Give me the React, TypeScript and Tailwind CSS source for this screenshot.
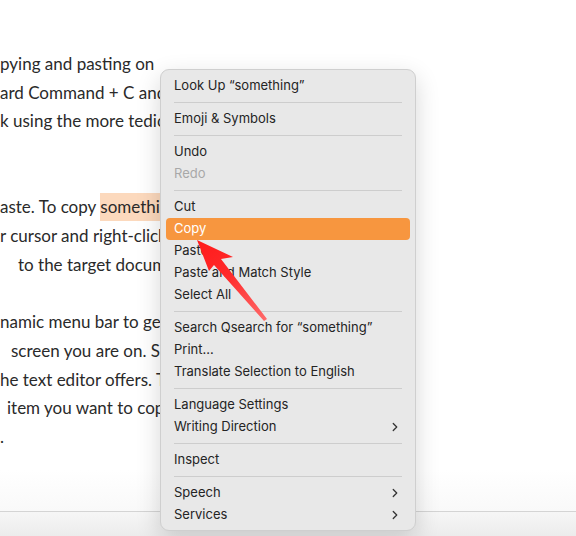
import { ChevronRight } from 'lucide-react';

type Entry =
  | { kind: 'item'; label: string; disabled?: boolean; active?: boolean; submenu?: boolean }
  | { kind: 'sep' };

const menu: Entry[] = [
  { kind: 'item', label: 'Look Up \u201csomething\u201d' },
  { kind: 'sep' },
  { kind: 'item', label: 'Emoji & Symbols' },
  { kind: 'sep' },
  { kind: 'item', label: 'Undo' },
  { kind: 'item', label: 'Redo', disabled: true },
  { kind: 'sep' },
  { kind: 'item', label: 'Cut' },
  { kind: 'item', label: 'Copy', active: true },
  { kind: 'item', label: 'Paste' },
  { kind: 'item', label: 'Paste and Match Style' },
  { kind: 'item', label: 'Select All' },
  { kind: 'sep' },
  { kind: 'item', label: 'Search Qsearch for \u201csomething\u201d' },
  { kind: 'item', label: 'Print\u2026' },
  { kind: 'item', label: 'Translate Selection to English' },
  { kind: 'sep' },
  { kind: 'item', label: 'Language Settings' },
  { kind: 'item', label: 'Writing Direction', submenu: true },
  { kind: 'sep' },
  { kind: 'item', label: 'Inspect' },
  { kind: 'sep' },
  { kind: 'item', label: 'Speech', submenu: true },
  { kind: 'item', label: 'Services', submenu: true },
];

function ContextMenu() {
  return (
    <div className="absolute left-[160px] top-[69px] w-[256px] rounded-[9px] border border-[#cfcfcf] bg-[#e8e8e8] px-[5px] pt-[5px] pb-[4px] shadow-[0_8px_24px_rgba(0,0,0,0.16)] font-['Inter',sans-serif] text-[13px]">
      {menu.map((entry, i) => {
        if (entry.kind === 'sep') {
          return (
            <div key={i} className="flex h-[11px] items-center px-[8px]">
              <div className="h-px w-full bg-[#cdcdcd]" />
            </div>
          );
        }
        return (
          <div
            key={i}
            className={
              'flex h-[22px] items-center justify-between rounded-[4px] pl-[8px] pr-[8px] ' +
              (entry.active
                ? 'bg-[#f7963f] text-white'
                : entry.disabled
                ? 'text-[#a8a8a8]'
                : 'text-[#242424]')
            }
          >
            <span>{entry.label}</span>
            {entry.submenu && <ChevronRight className="h-[14px] w-[14px] text-[#333]" strokeWidth={2.2} />}
          </div>
        );
      })}
    </div>
  );
}

function Arrow() {
  return (
    <svg className="pointer-events-none absolute left-0 top-0" width="576" height="536" viewBox="0 0 576 536">
      <defs>
        <linearGradient id="arr" x1="197" y1="240" x2="266" y2="321" gradientUnits="userSpaceOnUse">
          <stop offset="0" stopColor="#ff1a1a" />
          <stop offset="0.45" stopColor="#ff2b2b" />
          <stop offset="1" stopColor="#ff6a6a" />
        </linearGradient>
      </defs>
      <polygon
        points="197,240 233,257 221,259 267,319 264,321 214,265 209,271"
        fill="url(#arr)"
      />
    </svg>
  );
}

const lines: { text?: string; pad?: string; mark?: boolean }[] = [
  { text: 'pying and pasting on' },
  { text: 'ard Command + C and Command + V' },
  { text: 'k using the more tedious' },
  {},
  {},
  { text: 'aste. To copy\u00a0', mark: true },
  { text: 'r cursor and right-click on it' },
  { text: 'to the target document', pad: 'pl-[18px]' },
  {},
  { text: 'namic menu bar to get' },
  { text: 'screen you are on. See', pad: 'pl-[11px]' },
  { text: 'he text editor offers. The' },
  { text: 'item you want to copy', pad: 'pl-[7px]' },
  { text: '.' },
];

export default function App() {
  return (
    <div className="relative flex h-[536px] w-[576px] flex-col overflow-hidden bg-white">
      <div className="flex-1 bg-gradient-to-b from-white from-[92%] to-[#f9f9f9] pt-[50px] font-['Lato',sans-serif] text-[17px] text-[#2a2a2a]">
        {lines.map((l, i) => (
          <div key={i} className={'h-[28.7px] whitespace-nowrap leading-[28.7px] ' + (l.pad ?? '')}>
            {l.text}
            {l.mark && <span className="inline-block h-[28px] bg-[#fcd9bd] leading-[28px]">something</span>}
          </div>
        ))}
      </div>
      <div className="h-[25px] border-t border-[#d4d4d4] bg-gradient-to-b from-[#f6f6f6] to-[#ececec]" />
      <ContextMenu />
      <Arrow />
    </div>
  );
}
